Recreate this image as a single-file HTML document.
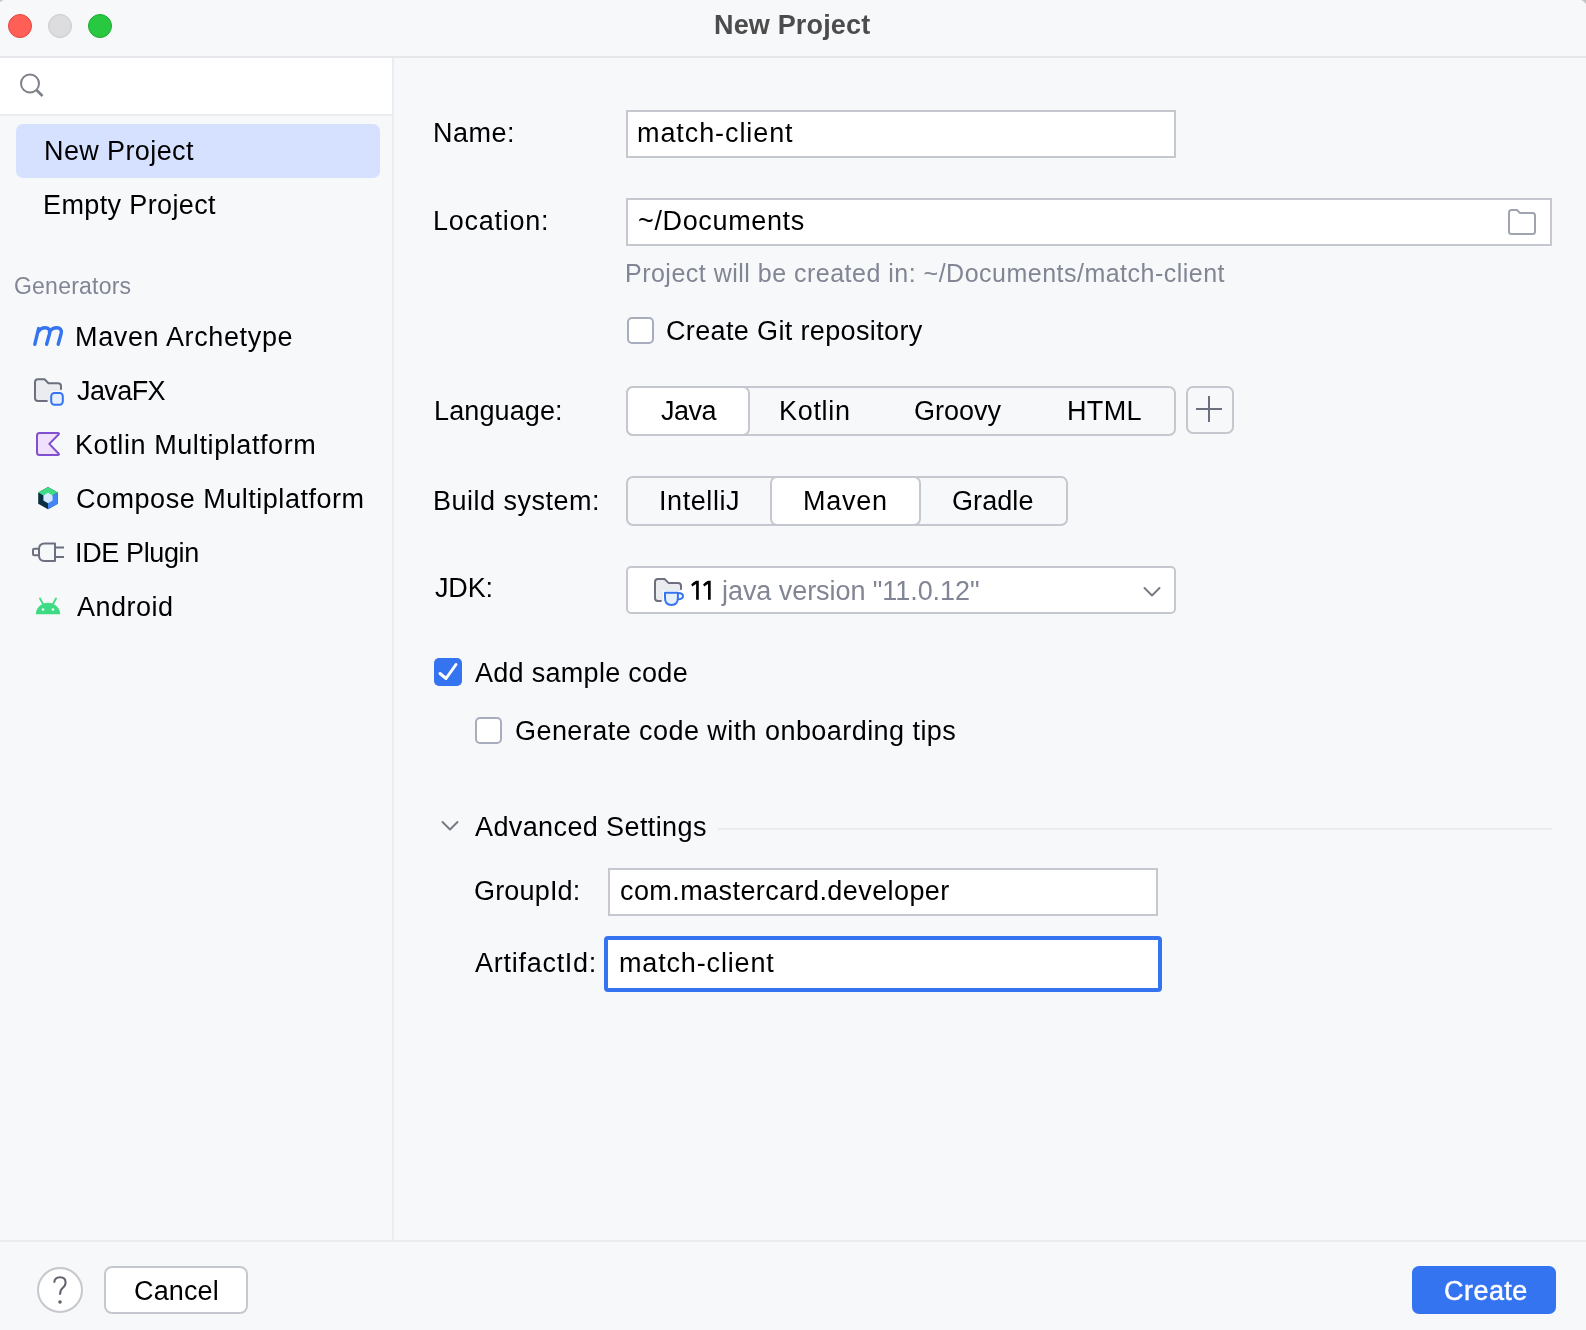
<!DOCTYPE html>
<html><head><meta charset="utf-8"><title>New Project</title>
<style>
html,body{margin:0;padding:0}
body{width:1586px;height:1330px;position:relative;overflow:hidden;background:#f7f8fa;font-family:"Liberation Sans",sans-serif}
.t{position:absolute;white-space:pre;font-family:"Liberation Sans",sans-serif;will-change:transform}
.a{position:absolute;box-sizing:border-box}
svg{position:absolute;overflow:visible}
</style></head><body>
<!-- title bar -->
<svg style="left:0;top:0" width="1586" height="8" viewBox="0 0 1586 8"><path d="M0 0 L3.8 0 Q1.5 0.6 0 2.2 Z" fill="#c4c4c6"/><path d="M1586 0 L1581.5 0 Q1584.5 1.5 1586 4.2 Z" fill="#c4c4c6"/></svg>
<div class="a" style="left:0;top:56px;width:1586px;height:2px;background:#e6e7ea"></div>
<div class="a" style="left:8px;top:14px;width:24px;height:24px;border-radius:50%;background:#ff5f57;border:1px solid #e2463f"></div>
<div class="a" style="left:48px;top:14px;width:24px;height:24px;border-radius:50%;background:#dddddf;border:1px solid #c9c9cc"></div>
<div class="a" style="left:88px;top:14px;width:24px;height:24px;border-radius:50%;background:#28c840;border:1px solid #1ea932"></div>
<!-- search -->
<div class="a" style="left:0;top:58px;width:392px;height:56px;background:#ffffff"></div>
<div class="a" style="left:0;top:114px;width:392px;height:2px;background:#ebecf0"></div>
<svg style="left:0;top:0" width="60" height="110" viewBox="0 0 60 110"><circle cx="30" cy="83.5" r="9" fill="none" stroke="#7d8088" stroke-width="2"/><path d="M36.5 90 L42.5 96" stroke="#7d8088" stroke-width="2.6" stroke-linecap="butt"/></svg>
<!-- sidebar border + footer -->
<div class="a" style="left:392px;top:58px;width:2px;height:1182px;background:#ebecf0"></div>
<div class="a" style="left:0;top:1240px;width:1586px;height:2px;background:#ebecf0"></div>
<!-- selected item -->
<div class="a" style="left:16px;top:124px;width:364px;height:54px;border-radius:7px;background:#d5e1ff"></div>

<!-- sidebar icons -->
<svg style="left:0;top:0" width="80" height="640" viewBox="0 0 80 640">
  <!-- maven m -->
  <path d="M34.8 344.3 L38.6 328.6 M38 332 C39.8 329.1 42.6 327.8 45.4 327.8 C48.7 327.8 50.4 330.1 49.7 333.2 L46.6 344.3 M49.4 332 C51.2 329.1 54 327.8 56.8 327.8 C60.3 327.8 61.9 330.1 61.2 333.2 L58.2 344.3" fill="none" stroke="#3574f0" stroke-width="3.4" stroke-linecap="round" stroke-linejoin="round"/>
  <!-- javafx folder -->
  <path d="M35 382.3 Q35 379.3 38 379.3 L44.6 379.3 L48.4 383.2 L58 383.2 Q61 383.2 61 386.2 L61 391 L50 391 L50 400.9 L38 400.9 Q35 400.9 35 397.9 Z" fill="#ebecf0"/>
  <path d="M61 389.7 L61 386.2 Q61 383.2 58 383.2 L48.4 383.2 L44.6 379.3 L38 379.3 Q35 379.3 35 382.3 L35 397.9 Q35 400.9 38 400.9 L47.6 400.9" fill="none" stroke="#6c707e" stroke-width="2"/>
  <rect x="51.2" y="393.1" width="11.6" height="11.6" rx="3.2" fill="#e7effd" stroke="#3574f0" stroke-width="2"/>
  <!-- kotlin -->
  <path d="M39.5 433 L57.5 433 Q60 433 58.3 434.8 L49.3 443.9 L58.3 453.2 Q60 455 57.5 455 L39.5 455 Q37 455 37 452.5 L37 435.5 Q37 433 39.5 433 Z" fill="#efe1fd" stroke="#8150d0" stroke-width="2" stroke-linejoin="round"/>
  <!-- compose -->
  <path d="M48 487 L57.8 492.5 L57.8 503.7 L48 509.3 L38.2 503.7 L38.2 492.5 Z" fill="#083042"/>
  <path d="M48 487 L57.8 492.5 L48 498 L38.2 492.5 Z" fill="#3ddc84"/>
  <path d="M57.8 492.5 L57.8 503.7 L48 509.3 L48 498 Z" fill="#4285f4"/>
  <path d="M48 492.8 L52.6 495.4 L52.6 500.6 L48 503.2 L43.4 500.6 L43.4 495.4 Z" fill="#d6e8ff"/>
  <!-- plugin -->
  <path d="M39 552 L39 549 Q39 543.5 44.5 543.5 L55 543.5 L55 561 L44.5 561 Q39 561 39 555.5 Z" fill="none" stroke="#6c707e" stroke-width="2" stroke-linejoin="round"/>
  <rect x="33" y="548.8" width="6" height="6.4" rx="1.2" fill="none" stroke="#6c707e" stroke-width="2"/>
  <path d="M55 547.5 L64 547.5 M55 557 L64 557" stroke="#6c707e" stroke-width="2"/>
  <!-- android -->
  <path d="M35.8 614.3 A12.2 11.5 0 0 1 60.2 614.3 Z" fill="#3ddc84"/>
  <path d="M40 598.5 L43 604 M56 598.5 L53 604" stroke="#3ddc84" stroke-width="1.8" stroke-linecap="round"/>
  <circle cx="43" cy="609.5" r="1.3" fill="#f7f8fa"/>
  <circle cx="53" cy="609.5" r="1.3" fill="#f7f8fa"/>
</svg>

<!-- name -->
<div class="a" style="left:626px;top:110px;width:550px;height:48px;background:#fff;border:2px solid #c6c8cf"></div>
<!-- location -->
<div class="a" style="left:626px;top:198px;width:926px;height:48px;background:#fff;border:2px solid #c6c8cf"></div>
<svg style="left:1500px;top:200px" width="44" height="44" viewBox="0 0 44 44"><path d="M9 12.5 Q9 10 11.5 10 L17 10 L20 13 L32.5 13 Q35 13 35 15.5 L35 31.5 Q35 34 32.5 34 L11.5 34 Q9 34 9 31.5 Z" fill="none" stroke="#a0a4ae" stroke-width="2" stroke-linejoin="round"/></svg>
<!-- git checkbox -->
<div class="a" style="left:626.5px;top:316.5px;width:27px;height:27px;background:#fff;border:2px solid #a8adbd;border-radius:5px"></div>
<!-- language group -->
<div class="a" style="left:626px;top:386px;width:550px;height:50px;border:2px solid #c6c8cf;border-radius:7px"></div>
<div class="a" style="left:626px;top:386px;width:124px;height:50px;background:#fff;border:2px solid #c6c8cf;border-radius:7px"></div>
<div class="a" style="left:1186px;top:386px;width:48px;height:48px;border:2px solid #c6c8cf;border-radius:7px"></div>
<svg style="left:1186px;top:386px" width="48" height="48" viewBox="0 0 48 48"><path d="M10 23 L36 23 M23 10 L23 36" stroke="#6c707e" stroke-width="2"/></svg>
<!-- build group -->
<div class="a" style="left:626px;top:476px;width:442px;height:50px;border:2px solid #c6c8cf;border-radius:7px"></div>
<div class="a" style="left:770px;top:476px;width:151px;height:50px;background:#fff;border:2px solid #c6c8cf;border-radius:7px"></div>
<!-- jdk -->
<div class="a" style="left:626px;top:566px;width:550px;height:48px;background:#fff;border:2px solid #c6c8cf;border-radius:5px"></div>
<svg style="left:0;top:0" width="1" height="1" viewBox="0 0 1 1">
  <path d="M655 582 Q655 579 658 579 L664.6 579 L668.7 583.1 L678 583.1 Q681 583.1 681 586.1 L681 591 L663 591 L663 600.9 L658 600.9 Q655 600.9 655 597.9 Z" fill="#ebecf0"/>
  <path d="M681 589.7 L681 586.1 Q681 583.1 678 583.1 L668.7 583.1 L664.6 579 L658 579 Q655 579 655 582 L655 597.9 Q655 600.9 658 600.9 L661.6 600.9" fill="none" stroke="#6c707e" stroke-width="2"/>
  <path d="M665 592.7 L677.9 592.7 L677.9 598 Q677.9 604.9 671.45 604.9 Q665 604.9 665 598 Z" fill="#e7effd" stroke="#3574f0" stroke-width="2" stroke-linejoin="round"/>
  <path d="M677.6 593 Q683 593 683 596.2 Q683 599.2 677.4 599.2" fill="none" stroke="#3574f0" stroke-width="2"/>
</svg>
<svg style="left:1136px;top:580px" width="32" height="24" viewBox="0 0 32 24"><path d="M8.5 8 L16 15.5 L23.5 8" fill="none" stroke="#767a84" stroke-width="2" stroke-linecap="round" stroke-linejoin="round"/></svg>
<svg style="left:0;top:0" width="1" height="1" viewBox="0 0 1 1" overflow="visible"><path d="M696.1 580.8 L698.8 580.8 L698.8 599.8 L696.1 599.8 L696.1 583.9 Q694.0 584.9 692.4 586.4 L691.2 584.4 Q693.5 581.8 696.1 580.8 Z M708.0 580.8 L710.7 580.8 L710.7 599.8 L708.0 599.8 L708.0 583.9 Q705.9 584.9 704.3 586.4 L703.1 584.4 Q705.4 581.8 708.0 580.8 Z" fill="#000"/></svg>
<!-- add sample code checkbox -->
<div class="a" style="left:434px;top:658px;width:28px;height:28px;background:#3574f0;border-radius:5px"></div>
<svg style="left:434px;top:658px" width="28" height="28" viewBox="0 0 28 28"><path d="M6 15.5 L12 20.5 L22 6.5" fill="none" stroke="#fff" stroke-width="3" stroke-linecap="round" stroke-linejoin="round"/></svg>
<div class="a" style="left:474.5px;top:716.5px;width:27px;height:27px;background:#fff;border:2px solid #a8adbd;border-radius:5px"></div>
<!-- advanced -->
<svg style="left:434px;top:814px" width="32" height="24" viewBox="0 0 32 24"><path d="M8.5 8 L16 15.5 L23.5 8" fill="none" stroke="#767a84" stroke-width="2" stroke-linecap="round" stroke-linejoin="round"/></svg>
<div class="a" style="left:718px;top:828px;width:834px;height:2px;background:#ebecf0"></div>
<div class="a" style="left:608px;top:868px;width:550px;height:48px;background:#fff;border:2px solid #c6c8cf"></div>
<div class="a" style="left:604px;top:936px;width:558px;height:56px;background:#fff;border:4px solid #3574f0;border-radius:4px"></div>
<!-- footer -->
<div class="a" style="left:37px;top:1267px;width:46px;height:46px;border-radius:50%;background:#fff;border:2px solid #c6c8ce"></div>
<svg style="left:37px;top:1267px" width="46" height="46" viewBox="0 0 46 46"><path d="M17.3 15.8 Q17.3 10.2 23 10.2 Q28.6 10.2 28.6 15.6 Q28.6 18.8 25.4 21.3 Q23 23.2 23 27.8" fill="none" stroke="#5f636e" stroke-width="2"/><circle cx="23" cy="35" r="1.8" fill="#5f636e"/></svg>
<div class="a" style="left:104px;top:1266px;width:144px;height:48px;background:#fff;border:2px solid #c6c8cf;border-radius:8px"></div>
<div class="a" style="left:1412px;top:1266px;width:144px;height:48px;background:#3574f0;border-radius:7px"></div>

<div class="t" style="left:713.6px;top:12.0px;font-size:27px;line-height:27px;letter-spacing:0.16px;font-weight:700;color:#4c4c4c">New Project</div>
<div class="t" style="left:43.5px;top:138.0px;font-size:27px;line-height:27px;letter-spacing:0.39px;font-weight:400;color:#000000">New Project</div>
<div class="t" style="left:43.0px;top:192.0px;font-size:27px;line-height:27px;letter-spacing:0.38px;font-weight:400;color:#000000">Empty Project</div>
<div class="t" style="left:13.9px;top:275.0px;font-size:23px;line-height:23px;letter-spacing:0.22px;font-weight:400;color:#818594">Generators</div>
<div class="t" style="left:75.0px;top:324.0px;font-size:27px;line-height:27px;letter-spacing:0.64px;font-weight:400;color:#000000">Maven Archetype</div>
<div class="t" style="left:77.0px;top:378.0px;font-size:27px;line-height:27px;letter-spacing:-0.60px;font-weight:400;color:#000000">JavaFX</div>
<div class="t" style="left:75.0px;top:432.0px;font-size:27px;line-height:27px;letter-spacing:0.59px;font-weight:400;color:#000000">Kotlin Multiplatform</div>
<div class="t" style="left:76.0px;top:486.0px;font-size:27px;line-height:27px;letter-spacing:0.52px;font-weight:400;color:#000000">Compose Multiplatform</div>
<div class="t" style="left:75.0px;top:540.0px;font-size:27px;line-height:27px;letter-spacing:-0.37px;font-weight:400;color:#000000">IDE Plugin</div>
<div class="t" style="left:77.0px;top:594.0px;font-size:27px;line-height:27px;letter-spacing:0.48px;font-weight:400;color:#000000">Android</div>
<div class="t" style="left:433.0px;top:120.0px;font-size:27px;line-height:27px;letter-spacing:0.50px;font-weight:400;color:#000000">Name:</div>
<div class="t" style="left:637.0px;top:120.0px;font-size:27px;line-height:27px;letter-spacing:0.91px;font-weight:400;color:#000000">match-client</div>
<div class="t" style="left:433.0px;top:208.0px;font-size:27px;line-height:27px;letter-spacing:0.75px;font-weight:400;color:#000000">Location:</div>
<div class="t" style="left:638.0px;top:208.0px;font-size:27px;line-height:27px;letter-spacing:0.64px;font-weight:400;color:#000000">~/Documents</div>
<div class="t" style="left:625.0px;top:261.0px;font-size:25px;line-height:25px;letter-spacing:0.49px;font-weight:400;color:#818594">Project will be created in: ~/Documents/match-client</div>
<div class="t" style="left:666.0px;top:318.0px;font-size:27px;line-height:27px;letter-spacing:0.36px;font-weight:400;color:#000000">Create Git repository</div>
<div class="t" style="left:433.7px;top:398.0px;font-size:27px;line-height:27px;letter-spacing:0.11px;font-weight:400;color:#000000">Language:</div>
<div class="t" style="left:661.0px;top:398.0px;font-size:27px;line-height:27px;letter-spacing:-0.50px;font-weight:400;color:#000000">Java</div>
<div class="t" style="left:779.0px;top:398.0px;font-size:27px;line-height:27px;letter-spacing:0.68px;font-weight:400;color:#000000">Kotlin</div>
<div class="t" style="left:914.0px;top:398.0px;font-size:27px;line-height:27px;letter-spacing:0.00px;font-weight:400;color:#000000">Groovy</div>
<div class="t" style="left:1067.0px;top:398.0px;font-size:27px;line-height:27px;letter-spacing:0.33px;font-weight:400;color:#000000">HTML</div>
<div class="t" style="left:433.0px;top:488.0px;font-size:27px;line-height:27px;letter-spacing:0.50px;font-weight:400;color:#000000">Build system:</div>
<div class="t" style="left:659.0px;top:488.0px;font-size:27px;line-height:27px;letter-spacing:0.57px;font-weight:400;color:#000000">IntelliJ</div>
<div class="t" style="left:803.0px;top:488.0px;font-size:27px;line-height:27px;letter-spacing:0.75px;font-weight:400;color:#000000">Maven</div>
<div class="t" style="left:952.0px;top:488.0px;font-size:27px;line-height:27px;letter-spacing:0.08px;font-weight:400;color:#000000">Gradle</div>
<div class="t" style="left:435.0px;top:575.0px;font-size:27px;line-height:27px;letter-spacing:-0.17px;font-weight:400;color:#000000">JDK:</div>
<div class="t" style="left:721.7px;top:578.0px;font-size:27px;line-height:27px;letter-spacing:-0.06px;font-weight:400;color:#818594">java version &quot;11.0.12&quot;</div>
<div class="t" style="left:475.0px;top:660.0px;font-size:27px;line-height:27px;letter-spacing:0.29px;font-weight:400;color:#000000">Add sample code</div>
<div class="t" style="left:514.5px;top:717.5px;font-size:27px;line-height:27px;letter-spacing:0.44px;font-weight:400;color:#000000">Generate code with onboarding tips</div>
<div class="t" style="left:475.2px;top:814.0px;font-size:27px;line-height:27px;letter-spacing:0.39px;font-weight:400;color:#000000">Advanced Settings</div>
<div class="t" style="left:474.0px;top:878.0px;font-size:27px;line-height:27px;letter-spacing:0.17px;font-weight:400;color:#000000">GroupId:</div>
<div class="t" style="left:620.0px;top:878.0px;font-size:27px;line-height:27px;letter-spacing:0.42px;font-weight:400;color:#000000">com.mastercard.developer</div>
<div class="t" style="left:475.0px;top:950.0px;font-size:27px;line-height:27px;letter-spacing:0.73px;font-weight:400;color:#000000">ArtifactId:</div>
<div class="t" style="left:619.0px;top:950.0px;font-size:27px;line-height:27px;letter-spacing:0.84px;font-weight:400;color:#000000">match-client</div>
<div class="t" style="left:134.3px;top:1278.0px;font-size:27px;line-height:27px;letter-spacing:0.14px;font-weight:400;color:#000000">Cancel</div>
<div class="t" style="left:1444.0px;top:1278.0px;font-size:27px;line-height:27px;letter-spacing:0.46px;font-weight:400;color:#ffffff;-webkit-text-stroke:0.45px #fff">Create</div>
</body></html>
